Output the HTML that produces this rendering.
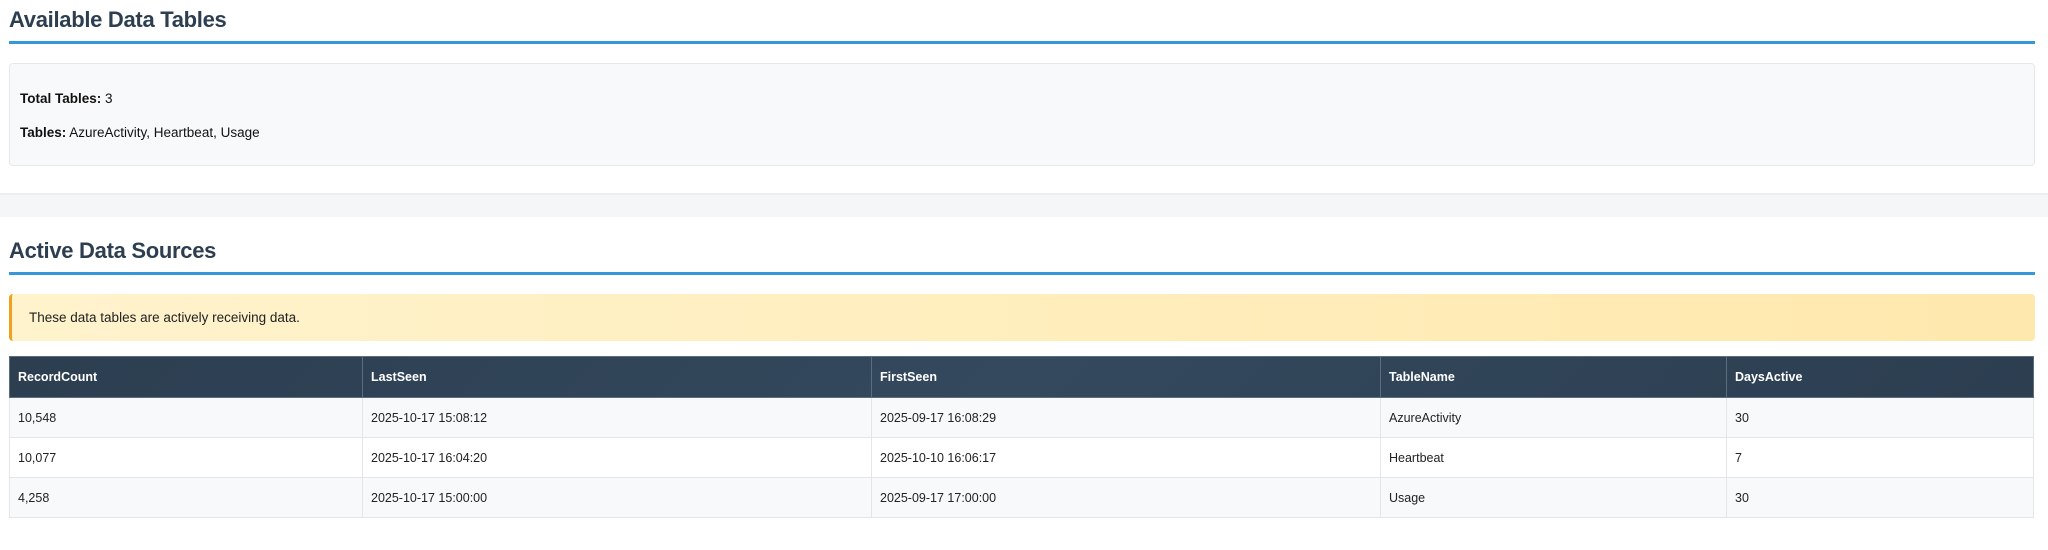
<!DOCTYPE html>
<html><head><meta charset="utf-8"><style>
*{box-sizing:border-box;margin:0;padding:0}
body{width:2048px;height:550px;background:#fff;font-family:"Liberation Sans",sans-serif;color:#222;position:relative;overflow:hidden}
h2{position:absolute;left:9px;font-size:22px;font-weight:bold;color:#2c3e50;letter-spacing:-0.3px}
.line{position:absolute;left:9px;width:2026px;height:3px;background:#3498db}
.box{position:absolute;left:9px;top:63px;width:2026px;height:103px;background:#f8f9fa;border:1px solid #e6e9ec;border-radius:4px}
.box p{position:absolute;left:10px;font-size:13.5px;color:#111}
.band{position:absolute;left:0;top:193px;width:2048px;height:24px;background:#f5f6f8;border-top:2px solid #eceef0}
.alert{position:absolute;left:9px;top:294px;width:2026px;height:47px;border-radius:4px;border-left:3px solid #f0a020;background:linear-gradient(90deg,#fff3cd,#ffe8ad);font-size:13.5px;color:#222;padding-left:17px;line-height:47px}
table{position:absolute;left:9px;top:356px;width:2025px;border-collapse:collapse;font-size:12.5px}
tr.h{background:linear-gradient(135deg,#2c3e50,#34495e 50%,#2c3e50)}
th{color:#fff;font-weight:bold;text-align:left;height:41px;padding-left:8px;border:1px solid #5d6d7e}
td{height:40px;padding-left:8px;border:1px solid #e3e6e9;color:#222}
tr:nth-child(even) td{background:#f8f9fa}
</style></head><body>
<h2 style="top:7px">Available Data Tables</h2>
<div class="line" style="top:41px"></div>
<div class="box">
<p style="top:27px"><b>Total Tables:</b> 3</p>
<p style="top:61px"><b>Tables:</b> AzureActivity, Heartbeat, Usage</p>
</div>
<div class="band"></div>
<h2 style="top:238px">Active Data Sources</h2>
<div class="line" style="top:272px"></div>
<div class="alert">These data tables are actively receiving data.</div>
<table>
<tr class="h"><th style="width:353px">RecordCount</th><th style="width:509px">LastSeen</th><th style="width:509px">FirstSeen</th><th style="width:346px">TableName</th><th>DaysActive</th></tr>
<tr><td>10,548</td><td>2025-10-17 15:08:12</td><td>2025-09-17 16:08:29</td><td>AzureActivity</td><td>30</td></tr>
<tr><td>10,077</td><td>2025-10-17 16:04:20</td><td>2025-10-10 16:06:17</td><td>Heartbeat</td><td>7</td></tr>
<tr><td>4,258</td><td>2025-10-17 15:00:00</td><td>2025-09-17 17:00:00</td><td>Usage</td><td>30</td></tr>
</table>
</body></html>
